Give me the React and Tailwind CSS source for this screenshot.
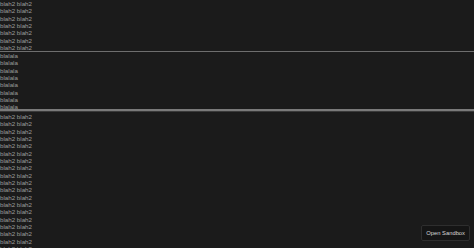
import React from 'react';

const scroll =
  'overflow-y-auto [&::-webkit-scrollbar]:w-[2px] [&::-webkit-scrollbar-track]:bg-[#050505] [&::-webkit-scrollbar-thumb]:bg-[#5a5a5a]';

const Lines = ({ text, count }) => (
  <>
    {Array.from({ length: count }).map((_, i) => (
      <div key={i} className="whitespace-nowrap">
        {text}
      </div>
    ))}
  </>
);

export default function App() {
  return (
    <div
      className="h-[248px] w-full overflow-hidden bg-[#1b1b1b] text-[#9c9c9c] text-[6.2px] leading-[7.33px] flex flex-col"
      style={{ fontFamily: '"Liberation Sans", Arial, sans-serif' }}
    >
      <div className={`h-[52px] shrink-0 border-b border-[#6e6e6e] ${scroll}`}>
        <Lines text="blah2 blah2" count={24} />
      </div>
      <div className={`h-[59px] shrink-0 border-b-2 border-[#7a7a7a] ${scroll}`}>
        <Lines text="blalala" count={24} />
      </div>
      <div className="flex-1 min-h-0 border-t border-[#3a3a3a] pt-[1px] overflow-hidden">
        <Lines text="blah2 blah2" count={30} />
      </div>

      <button
        type="button"
        className="fixed right-[4px] bottom-[7px] rounded-[2px] border border-[#2e2e2e] bg-[#151515] px-[4px] py-[3.5px] text-[5.8px] leading-[7px] text-[#d8d8d8]"
      >
        Open Sandbox
      </button>
    </div>
  );
}
